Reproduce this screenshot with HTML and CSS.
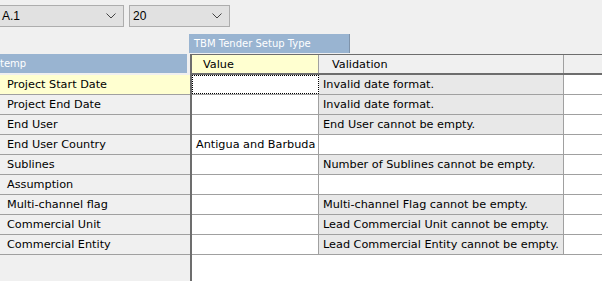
FILE: index.html
```html
<!DOCTYPE html>
<html lang="en">
<head>
    <meta charset="UTF-8">
    <title>TBM Tender Setup</title>
    <link rel="stylesheet" href="styles.css">
</head>
<body>
    <!-- Toolbar -->
    <div class="toolbar">
        <div class="combo combo-wide">
            <span>A.1</span>
            <svg class="chevron" width="10" height="6" viewBox="0 0 10 6"><path d="M0.5 0.5 L5 5 L9.5 0.5" fill="none" stroke="#444" stroke-width="1"/></svg>
        </div>
        <div class="combo combo-narrow">
            <span>20</span>
            <svg class="chevron" width="10" height="6" viewBox="0 0 10 6"><path d="M0.5 0.5 L5 5 L9.5 0.5" fill="none" stroke="#444" stroke-width="1"/></svg>
        </div>
    </div>

    <div class="main">
        <!-- Row labels -->
        <div class="left">
            <div class="left-head">temp</div>
            <div class="label selected">Project Start Date</div>
            <div class="label">Project End Date</div>
            <div class="label">End User</div>
            <div class="label">End User Country</div>
            <div class="label">Sublines</div>
            <div class="label">Assumption</div>
            <div class="label">Multi-channel flag</div>
            <div class="label">Commercial Unit</div>
            <div class="label">Commercial Entity</div>
        </div>

        <!-- Grid -->
        <div class="right">
            <div class="tab-row">
                <div class="tab">TBM Tender Setup Type</div>
            </div>
            <div class="grid">
                <div class="row head">
                    <div class="cell value head-value">Value</div>
                    <div class="cell check head-check">Validation</div>
                    <div class="cell filler"></div>
                </div>
                <div class="row"><div class="cell value focus"></div><div class="cell check err">Invalid date format.</div></div>
                <div class="row"><div class="cell value"></div><div class="cell check err">Invalid date format.</div></div>
                <div class="row"><div class="cell value"></div><div class="cell check err">End User cannot be empty.</div></div>
                <div class="row"><div class="cell value">Antigua and Barbuda</div><div class="cell check"></div></div>
                <div class="row"><div class="cell value"></div><div class="cell check err">Number of Sublines cannot be empty.</div></div>
                <div class="row"><div class="cell value"></div><div class="cell check"></div></div>
                <div class="row"><div class="cell value"></div><div class="cell check err">Multi-channel Flag cannot be empty.</div></div>
                <div class="row"><div class="cell value"></div><div class="cell check err">Lead Commercial Unit cannot be empty.</div></div>
                <div class="row"><div class="cell value"></div><div class="cell check err">Lead Commercial Entity cannot be empty.</div></div>
            </div>
        </div>
    </div>
</body>
</html>
```

FILE: styles.css
```css
body {
    margin: 0;
    background-color: #f0f0f0;
    font-family: "DejaVu Sans", sans-serif;
    font-size: 11.25px;
    color: #000;
    height: 281px;
    overflow: hidden;
    display: flex;
    flex-direction: column;
}
.toolbar {
    display: flex;
    gap: 5px;
    padding-top: 5px;
    height: 34px;
    box-sizing: border-box;
}
.combo {
    height: 22px;
    box-sizing: border-box;
    background-color: #e1e1e1;
    border: 1px solid #adadad;
    display: flex;
    align-items: center;
    justify-content: space-between;
    padding: 0 7px 0 2px;
    font-family: "Liberation Sans", Arial, sans-serif;
    font-size: 12px;
}
.combo-wide {
    width: 125px;
    margin-left: -1px;
}
.combo-narrow {
    width: 101px;
    padding-left: 3px;
}
.chevron {
    display: block;
}
.main {
    flex: 1;
    display: flex;
}
.left {
    width: 190px;
    padding-top: 20px;
}
.left-head {
    width: 187px;
    height: 19px;
    margin-bottom: 2px;
    background-color: #99b4d1;
    color: #fff;
    line-height: 19px;
    font-size: 10px;
}
.label {
    height: 19px;
    line-height: 20px;
    border-bottom: 1px solid #a0a0a0;
    padding-left: 7px;
}
.selected {
    background-color: #ffffd0;
}
.right {
    flex: 1;
    display: flex;
    flex-direction: column;
}
.tab-row {
    height: 20px;
}
.tab {
    width: 161px;
    height: 19px;
    margin-left: -1px;
    box-sizing: border-box;
    background-color: #99b4d1;
    border-right: 1px solid #7f93aa;
    color: #fff;
    line-height: 19px;
    padding-left: 5px;
    font-size: 10px;
}
.grid {
    flex: 1;
    background-color: #fff;
    border-left: 2px solid #6d6d6d;
    border-top: 1px solid #6d6d6d;
}
.row {
    display: flex;
    height: 19px;
    border-bottom: 1px solid #a0a0a0;
}
.cell {
    line-height: 20px;
    box-sizing: border-box;
    white-space: nowrap;
    overflow: hidden;
}
.value {
    width: 127px;
    padding-left: 4px;
    border-right: 1px solid #a0a0a0;
}
.check {
    width: 245px;
    padding-left: 4px;
    border-right: 1px solid #a0a0a0;
}
.err {
    background-color: #e8e8e8;
}
.row.head {
    height: 18px;
    border-bottom: 2px solid #6d6d6d;
    background-color: #f0f0f0;
}
.head .cell {
    line-height: 19px;
}
.head-value {
    background-color: #ffffd0;
    padding-left: 11px;
}
.row .head-check {
    padding-left: 13px;
}
.filler {
    flex: 1;
}
.focus {
    border: 1px dotted #000;
    line-height: 18px;
}
```
